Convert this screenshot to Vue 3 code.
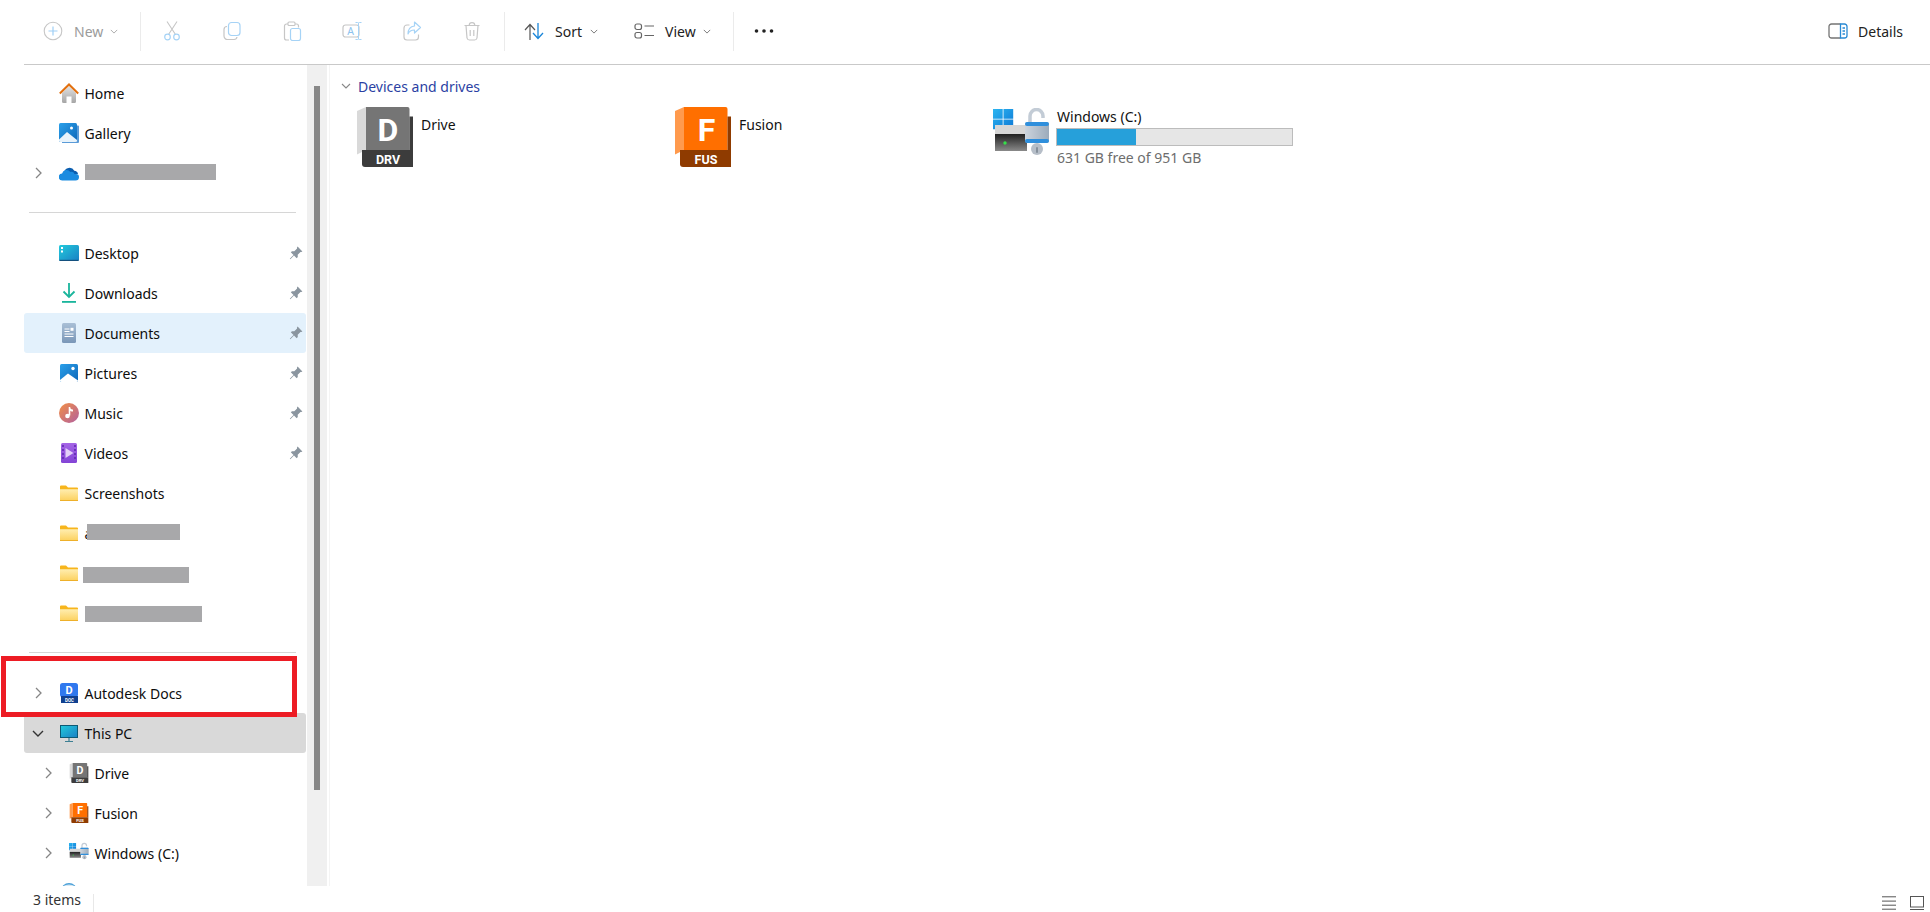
<template>
  <div class="app">
    <!-- shared icons -->
    <svg class="defs" aria-hidden="true">
      <defs>
        <linearGradient id="g-home" x1="0" y1="0" x2="0" y2="1"><stop offset="0" stop-color="#e2e2e2" /><stop offset="1" stop-color="#a6a6a6" /></linearGradient>
        <linearGradient id="g-blue" x1="0" y1="0" x2="1" y2="1"><stop offset="0" stop-color="#2aa0ea" /><stop offset="1" stop-color="#0f67b8" /></linearGradient>
        <linearGradient id="g-desk" x1="0" y1="0" x2="1" y2="1"><stop offset="0" stop-color="#22cbdc" /><stop offset="1" stop-color="#1a7fc4" /></linearGradient>
        <linearGradient id="g-doc" x1="0" y1="0" x2="0" y2="1"><stop offset="0" stop-color="#a9bfd6" /><stop offset="1" stop-color="#7a97b8" /></linearGradient>
        <linearGradient id="g-music" x1="0" y1="0" x2="1" y2="1"><stop offset="0" stop-color="#f28f45" /><stop offset="1" stop-color="#b2609f" /></linearGradient>
        <linearGradient id="g-video" x1="0" y1="0" x2="0" y2="1"><stop offset="0" stop-color="#a565e6" /><stop offset="1" stop-color="#8344d6" /></linearGradient>
        <linearGradient id="g-folder" x1="0" y1="0" x2="0" y2="1"><stop offset="0" stop-color="#ffeeb0" /><stop offset="1" stop-color="#fcd05c" /></linearGradient>
        <linearGradient id="g-disk" x1="0" y1="0" x2="0" y2="1"><stop offset="0" stop-color="#1f1f1f" /><stop offset="1" stop-color="#8a8a8a" /></linearGradient>
        <linearGradient id="g-lock" x1="0" y1="0" x2="1" y2="0"><stop offset="0" stop-color="#ccd4dd" /><stop offset="1" stop-color="#9cabbb" /></linearGradient>
        <linearGradient id="g-win" x1="0" y1="0" x2="1" y2="1"><stop offset="0" stop-color="#2bb5f0" /><stop offset="1" stop-color="#0d78d6" /></linearGradient>

        <symbol id="i-home" viewBox="0 0 20 20">
          <path d="M3 10 10 3l7 7v8.500a1.500 1.500 0 0 1-1.500 1.500h-3v-6.500h-5V20h-3A1.500 1.500 0 0 1 3 18.500z" fill="url(#g-home)" />
          <path d="M.8 10.500 10 1.500l9.200 9" fill="none" stroke="#e2700f" stroke-width="2" />
        </symbol>
        <symbol id="i-gallery" viewBox="0 0 20 20">
          <path d="M18 2.500h1a1 1 0 0 1 1 1V19a1 1 0 0 1-1 1H3v-1h15z" fill="#5a9bd8" />
          <rect y="0" width="18" height="19" rx="1.500" fill="url(#g-blue)" />
          <path d="M0 16.500 8 9l10 8v.5a1.500 1.500 0 0 1-1.500 1.500h-15A1.500 1.500 0 0 1 0 17.500z" fill="#e8f3fb" />
          <circle cx="12.500" cy="5" r="1.500" fill="#fff" />
        </symbol>
        <symbol id="i-cloud" viewBox="0 0 20 20">
          <path d="M5 9.500a5.500 5.500 0 0 1 10.300-1.700A4 4 0 0 1 19 11H5z" fill="#0a5eb0" />
          <path d="M3.500 17.500a3.500 3.500 0 0 1-.4-7 4.500 4.500 0 0 1 8.200-1.500c2-.5 3.500 .2 4.200 2H17a3 3 0 0 1 3 3 3.500 3.500 0 0 1-3.500 3.500z" fill="#1a8be0" />
        </symbol>
        <symbol id="i-desktop" viewBox="0 0 20 20">
          <rect y="2" width="20" height="16" rx="1.500" fill="url(#g-desk)" />
          <rect x="2" y="4" width="2" height="2" fill="#fff" />
          <rect x="2" y="7.500" width="2" height="2" fill="#fff" />
          <rect x="0.500" y="16.800" width="19" height="1.200" fill="#14507e" />
        </symbol>
        <symbol id="i-download" viewBox="0 0 20 20">
          <path d="M10 0v13M4.500 8.500 10 14l5.500-5.500" fill="none" stroke="#1ab59c" stroke-width="1.800" />
          <rect x="3" y="18" width="14" height="1.800" fill="#1ab59c" />
        </symbol>
        <symbol id="i-documents" viewBox="0 0 20 20">
          <rect x="3" width="14" height="20" rx="1.500" fill="url(#g-doc)" />
          <path d="M5.500 6h5M5.500 8.500h5M5.500 11h9M5.500 13.500h9" stroke="#fff" stroke-width="1" />
          <rect x="11.500" y="4.800" width="3" height="3" fill="#fff" />
        </symbol>
        <symbol id="i-pictures" viewBox="0 0 20 20">
          <rect x="1" y="1" width="18" height="18" rx="1.500" fill="url(#g-blue)" />
          <path d="M1 17 9 10.500 19 17.500a1.500 1.500 0 0 1-1.500 1.500h-15A1.500 1.500 0 0 1 1 17.500z" fill="#fff" />
          <circle cx="14" cy="5.500" r="1.700" fill="#fff" />
        </symbol>
        <symbol id="i-music" viewBox="0 0 20 20">
          <circle cx="10" cy="10" r="10" fill="url(#g-music)" />
          <path d="M10.500 4v8.500" stroke="#fff" stroke-width="1.600" />
          <path d="M10.500 4c.5 2 2.500 2.500 3.500 2.500v2c-1.500 0-3-.5-3.500-1.500z" fill="#fff" />
          <circle cx="8.500" cy="13" r="2.300" fill="#fff" />
        </symbol>
        <symbol id="i-videos" viewBox="0 0 20 20">
          <rect x="2" width="16" height="20" rx="1.500" fill="url(#g-video)" />
          <path d="M6.500 5v10l8-5z" fill="#e3d0f8" />
          <path d="M3.200 2h1.600v2H3.200zM3.200 6h1.600v2H3.200zM3.200 10h1.600v2H3.200zM3.200 14h1.600v2H3.200zM15.200 2h1.600v2h-1.600zM15.200 6h1.600v2h-1.600zM15.200 10h1.600v2h-1.600zM15.200 14h1.600v2h-1.600z" fill="#5f2bb0" />
        </symbol>
        <symbol id="i-folder" viewBox="0 0 20 20">
          <path d="M1 3.500a1 1 0 0 1 1-1h5l2 2h9a1 1 0 0 1 1 1V8H1z" fill="#f7b51c" />
          <path d="M1 6.200h18V17a1 1 0 0 1-1 1H2a1 1 0 0 1-1-1z" fill="url(#g-folder)" />
          <rect x="1" y="17" width="18" height="1" fill="#eeb02a" />
        </symbol>
        <symbol id="i-docs" viewBox="0 0 20 20">
          <rect x="1" width="18" height="14" rx="2.500" fill="#2f78ee" />
          <rect x="2" y="13" width="17" height="7" fill="#10408f" />
          <text x="10" y="10.500" class="t-letter" font-size="11" fill="#fff">D</text>
          <text x="10.500" y="18.500" class="t-letter" font-size="4.500" fill="#fff">DOC</text>
        </symbol>
        <symbol id="i-pc" viewBox="0 0 20 20">
          <rect x="1.500" y="2.500" width="17" height="12" fill="url(#g-desk)" stroke="#0d5a75" />
          <path d="M10 15v3M6 18.500h8" stroke="#3d7f93" stroke-width="1.200" />
        </symbol>
        <symbol id="i-network" viewBox="0 0 20 20">
          <circle cx="10" cy="8" r="8" fill="#4aa0d8" />
          <path d="M5 4c2-2 8-2 10 0" stroke="#d7e8f3" stroke-width="2" fill="none" />
        </symbol>
        <symbol id="i-pin" viewBox="0 0 14 14">
          <path d="M8.600.6 13.400 5.400 12.300 6.100 11.500 5.900 8.700 8.700 8.800 11 7.700 12.200 5 9.500 1.300 13.200.8 12.700 4.500 9 1.800 6.300 3 5.200 5.300 5.300 8.100 2.500 7.900 1.700z" fill="#8a959f" />
        </symbol>

        <symbol id="i-drive" viewBox="0 0 56 60">
          <path d="M0 4 9 0v43l-9 4.500z" fill="#d9d9d9" />
          <path d="M9 0h41.500a2 2 0 0 1 2 2v41H9z" fill="#757575" />
          <path d="M52.500 9.500H56V43h-3.500z" fill="#3c3c3c" />
          <path d="M5 43h51v17H8a3 3 0 0 1-3-3z" fill="#3c3c3c" />
          <text x="31" y="33.500" class="t-letter" font-size="32" fill="#fff">D</text>
          <text x="31" y="56.500" class="t-letter" font-size="12.500" fill="#fff">DRV</text>
        </symbol>
        <symbol id="i-fusion" viewBox="0 0 56 60">
          <path d="M0 4 9 0v43l-9 4.500z" fill="#ff9a4d" />
          <path d="M9 0h41.500a2 2 0 0 1 2 2v41H9z" fill="#ff6f00" />
          <path d="M52.500 9.500H56V43h-3.500z" fill="#8f3b00" />
          <path d="M5 43h51v17H8a3 3 0 0 1-3-3z" fill="#8f3b00" />
          <text x="31.500" y="33.500" class="t-letter" font-size="32" fill="#fff">F</text>
          <text x="31" y="56.500" class="t-letter" font-size="12.500" fill="#fff">FUS</text>
        </symbol>
        <symbol id="i-windows" viewBox="0 0 57 47">
          <path d="M0 1h9.700v9.700H0zM10.500 1h9.700v9.700h-9.700zM0 11.500h9.700v9.700H0zM10.500 11.500h9.700v9.700h-9.700z" fill="url(#g-win)" />
          <path d="M2 17h32v9H2z" fill="#d6d6d6" />
          <path d="M2 26h32v17H2z" fill="url(#g-disk)" />
          <circle cx="12" cy="35" r="1.700" fill="#35e04a" />
          <path d="M37 15V8a6.500 6.500 0 0 1 13 0v2" fill="none" stroke="#c3ccd6" stroke-width="3.500" />
          <rect x="32" y="14" width="24" height="21" rx="3" fill="url(#g-lock)" />
          <rect x="32" y="14" width="24" height="4" rx="2" fill="#2f8fdc" />
          <rect x="32" y="31" width="24" height="4" rx="2" fill="#2f8fdc" />
          <circle cx="44" cy="41" r="6" fill="#b6bec8" />
          <rect x="43" y="39" width="2" height="6" rx="1" fill="#858f9b" />
        </symbol>
      </defs>
    </svg>

    <header class="toolbar">
      <button class="new off">
        <svg class="ic" viewBox="0 0 20 20"><circle cx="10" cy="10" r="8.800" fill="none" stroke="#c6c6c6" stroke-width="1.100" /><path d="M10 5.500v9M5.500 10h9" stroke="#9fcff5" stroke-width="1.200" /></svg>
        <span class="label">New</span>
        <svg class="chev-down" viewBox="0 0 10 6"><path d="M1 1l4 4 4-4" /></svg>
      </button>
      <span class="sep"></span>
      <button class="tool first">
        <svg class="ic" viewBox="0 0 20 20"><path d="M6.500 13.500 15 .5M13.500 13.500 5 .5" stroke="#c6c6c6" stroke-width="1.100" fill="none" /><circle cx="5.500" cy="16" r="2.800" fill="none" stroke="#a6d3f6" stroke-width="1.200" /><circle cx="14.500" cy="16" r="2.800" fill="none" stroke="#a6d3f6" stroke-width="1.200" /></svg>
      </button>
      <button class="tool">
        <svg class="ic" viewBox="0 0 20 20"><path d="M5 5.500a3 3 0 0 0-3 3V15a3.500 3.500 0 0 0 3.500 3.500H12a3 3 0 0 0 3-2.500" fill="none" stroke="#c6c6c6" stroke-width="1.200" /><rect x="6.500" y="1.500" width="11.500" height="13" rx="3" fill="none" stroke="#a6d3f6" stroke-width="1.200" /></svg>
      </button>
      <button class="tool">
        <svg class="ic" viewBox="0 0 20 20"><path d="M6 3H4.500a2 2 0 0 0-2 2v12a2 2 0 0 0 2 2H7M13 3h1.500a2 2 0 0 1 2 2v1.500" fill="none" stroke="#c6c6c6" stroke-width="1.200" /><rect x="6" y="1" width="7" height="3.500" rx="1" fill="none" stroke="#c6c6c6" stroke-width="1.100" /><rect x="8.500" y="7.500" width="10" height="12" rx="2" fill="none" stroke="#a6d3f6" stroke-width="1.200" /></svg>
      </button>
      <button class="tool">
        <svg class="ic" viewBox="0 0 20 20"><rect x="1" y="4" width="16" height="12" rx="2.500" fill="none" stroke="#c6c6c6" stroke-width="1.200" /><text x="8.500" y="13.800" class="t-a" font-size="10.500" fill="#8dc3ee">A</text><path d="M13.500 1.500h2a1 1 0 0 1 1 1v15a1 1 0 0 1-1 1h-2M19.500 1.500h-2a1 1 0 0 0-1 1v15a1 1 0 0 0 1 1h2" fill="none" stroke="#a6d3f6" stroke-width="1" /></svg>
      </button>
      <button class="tool">
        <svg class="ic" viewBox="0 0 20 20"><path d="M7.500 4H5a3 3 0 0 0-3 3v9a3 3 0 0 0 3 3h8.500a3 3 0 0 0 3-3v-2.500" fill="none" stroke="#c6c6c6" stroke-width="1.200" /><path d="M12.500 1 18.500 6.500 12.500 12V9c-3.500 0-5.500 1.500-6.500 4 0-5 2.500-7.500 6.500-8z" fill="none" stroke="#a6d3f6" stroke-width="1.200" stroke-linejoin="round" /></svg>
      </button>
      <button class="tool last">
        <svg class="ic" viewBox="0 0 20 20"><path d="M2.500 4.500h15M7.200 4.500a2.800 2.800 0 0 1 5.600 0M4 4.500l1 12.500a2.500 2.500 0 0 0 2.500 2h5a2.500 2.500 0 0 0 2.500-2l1-12.500M8.200 9v6M11.800 9v6" fill="none" stroke="#c6c6c6" stroke-width="1.200" /></svg>
      </button>
      <span class="sep"></span>
      <button class="drop sort">
        <svg class="ic" viewBox="0 0 20 20"><path d="M6 4v15M1 9l5-5.500L11 9" fill="none" stroke="#555" stroke-width="1.200" /><path d="M14 2v15M9 12l5 5.500 5-5.500" fill="none" stroke="#1a86d9" stroke-width="1.300" /></svg>
        <span class="label">Sort</span>
        <svg class="chev-down" viewBox="0 0 10 6"><path d="M1 1l4 4 4-4" /></svg>
      </button>
      <button class="drop view">
        <svg class="ic" viewBox="0 0 20 20"><rect x="1" y="3" width="6.500" height="5.500" rx="2" fill="none" stroke="#666" stroke-width="1.200" /><rect x="1" y="11.500" width="6.500" height="5.500" rx="2" fill="none" stroke="#666" stroke-width="1.200" /><path d="M10.500 5H20M10.500 14.500H20" stroke="#666" stroke-width="1.200" /></svg>
        <span class="label">View</span>
        <svg class="chev-down" viewBox="0 0 10 6"><path d="M1 1l4 4 4-4" /></svg>
      </button>
      <span class="sep"></span>
      <button class="tool more">
        <svg class="dots" viewBox="0 0 20 4"><circle cx="2.500" cy="2" r="1.800" /><circle cx="10" cy="2" r="1.800" /><circle cx="17.500" cy="2" r="1.800" /></svg>
      </button>
      <button class="details">
        <svg class="details-ic" viewBox="0 0 20 16"><path d="M12.500 1H3.500A2.500 2.500 0 0 0 1 3.500v9A2.500 2.500 0 0 0 3.500 15h9" fill="#fff" stroke="#747474" stroke-width="1.300" /><path d="M12.500 1h4A2.500 2.500 0 0 1 19 3.500v9a2.500 2.500 0 0 1-2.500 2.500h-4z" fill="#fff" stroke="#2a8ad4" stroke-width="1.300" /><path d="M14.500 5h2.500M14.500 8h2.500M14.500 11h2.500" stroke="#2a8ad4" stroke-width="1.300" /></svg>
        <span class="label">Details</span>
      </button>
    </header>

    <div class="body">
      <nav class="nav">
        <div class="nav-list">
          <template v-for="(row, i) in navRows" :key="i">
            <div v-if="row.divider" class="divider"></div>
            <div v-else class="row" :class="{ sub: row.sub, selected: row.selected, hover: row.hover }">
              <span class="arrow">
                <svg v-if="row.arrow === 'right'" class="chev-right" viewBox="0 0 7 12"><path d="M1 1l5 5-5 5" /></svg>
                <svg v-if="row.arrow === 'open'" class="chev-open" viewBox="0 0 12 7"><path d="M1 1l5 5 5-5" /></svg>
              </span>
              <svg class="row-icon" :class="{ lift: row.icon === 'windows' }"><use :href="'#i-' + row.icon" /></svg>
              <span class="name">{{ row.name }}</span>
              <span v-if="row.blank" class="blank" :style="{ left: row.blank[0] + 'px', width: row.blank[1] + 'px', top: row.blank[2] + 'px' }"></span>
              <svg v-if="row.pin" class="pin"><use href="#i-pin" /></svg>
            </div>
          </template>
        </div>
        <div class="scroll"><div class="thumb"></div></div>
      </nav>

      <main class="main">
        <div class="group">
          <svg class="group-chev" viewBox="0 0 10 6"><path d="M1 1l4 4 4-4" /></svg>
          <span>Devices and drives</span>
        </div>
        <div class="tiles">
          <div class="tile">
            <svg class="big"><use href="#i-drive" /></svg>
            <span class="tile-name">Drive</span>
          </div>
          <div class="tile">
            <svg class="big"><use href="#i-fusion" /></svg>
            <span class="tile-name">Fusion</span>
          </div>
          <div class="tile disk">
            <svg class="big-disk"><use href="#i-windows" /></svg>
            <div class="disk-info">
              <div class="disk-name">Windows (C:)</div>
              <div class="meter"><div class="meter-fill" :style="{ width: usedPct + '%' }"></div></div>
              <div class="disk-free">631 GB free of 951 GB</div>
            </div>
          </div>
        </div>
      </main>
    </div>

    <footer class="status">
      <span class="count">3 items</span>
      <span class="status-sep"></span>
      <div class="view-btns">
        <svg class="list-ic" viewBox="0 0 14 14"><path d="M0 .8h14M0 5.100h14M0 9.200h14M0 13.200h14" stroke="#555" stroke-width="1" /></svg>
        <svg class="list-ic" viewBox="0 0 14 14"><rect x=".5" y=".5" width="13" height="10.500" fill="none" stroke="#555" /><path d="M0 13.500h14" stroke="#555" /></svg>
      </div>
    </footer>

    <div class="callout"></div>
  </div>
</template>

<script setup>
const usedPct = ((951 - 631) / 951) * 100

// blank = [left, width, top] of the grey censor box inside the row
const navRows = [
  { name: 'Home', icon: 'home' },
  { name: 'Gallery', icon: 'gallery' },
  { name: '', icon: 'cloud', arrow: 'right', blank: [85, 131, 11] },
  { divider: true },
  { name: 'Desktop', icon: 'desktop', pin: true },
  { name: 'Downloads', icon: 'download', pin: true },
  { name: 'Documents', icon: 'documents', pin: true, selected: true },
  { name: 'Pictures', icon: 'pictures', pin: true },
  { name: 'Music', icon: 'music', pin: true },
  { name: 'Videos', icon: 'videos', pin: true },
  { name: 'Screenshots', icon: 'folder' },
  { name: 'a', icon: 'folder', blank: [87, 93, 11] },
  { name: '', icon: 'folder', blank: [83, 106, 14] },
  { name: '', icon: 'folder', blank: [85, 117, 13] },
  { divider: true },
  { name: 'Autodesk Docs', icon: 'docs', arrow: 'right' },
  { name: 'This PC', icon: 'pc', arrow: 'open', hover: true },
  { name: 'Drive', icon: 'drive', arrow: 'right', sub: true },
  { name: 'Fusion', icon: 'fusion', arrow: 'right', sub: true },
  { name: 'Windows (C:)', icon: 'windows', arrow: 'right', sub: true },
  { name: '', icon: 'network', arrow: 'right' }
]
</script>

<style>
html,
body {
  margin: 0;
  background: #fff;
}
</style>

<style scoped>
.app {
  position: relative;
  display: flex;
  flex-direction: column;
  width: 1930px;
  height: 912px;
  overflow: hidden;
  background: #fff;
  color: #111;
  font-family: "Noto Sans", "Liberation Sans", sans-serif;
  font-size: 14px;
}

.defs {
  position: absolute;
  width: 0;
  height: 0;
}

.t-letter {
  font-family: Roboto, "Liberation Sans", sans-serif;
  font-weight: 700;
  text-anchor: middle;
}

.t-a {
  font-family: "Noto Sans", sans-serif;
  text-anchor: middle;
}

button {
  display: flex;
  align-items: center;
  padding: 0;
  border: 0;
  background: none;
  font: inherit;
  color: inherit;
}

/* toolbar */
.toolbar {
  display: flex;
  align-items: center;
  flex: none;
  height: 62px;
  margin-left: 24px;
  padding: 0 0 2px 19px;
  border-bottom: 1px solid #c9c9c9;
}

.ic {
  flex: none;
  width: 20px;
  height: 20px;
}

.sep {
  flex: none;
  width: 1px;
  height: 39px;
  background: #ebebeb;
}

.label {
  color: #222;
}

.new {
  width: 97px;
  gap: 11px;
}

.new .label {
  color: #9b9b9b;
}

.chev-down {
  width: 8px;
  height: 5px;
  margin-left: -3px;
  fill: none;
  stroke: #777;
  stroke-width: 1.200;
}

.new .chev-down {
  margin-left: -4px;
  stroke: #aaa;
}

.view .chev-down {
  margin-left: -4px;
}

.tool {
  flex: none;
  justify-content: center;
  width: 60px;
  height: 40px;
}

.tool.first {
  margin-left: 1px;
}

.tool.last {
  margin-right: 2px;
}

.drop {
  flex: none;
  gap: 11px;
}

.sort {
  width: 129px;
  padding-left: 19px;
}

.view {
  width: 99px;
}

.dots {
  width: 20px;
  height: 4px;
  fill: #222;
}

.details {
  gap: 10px;
  margin-left: auto;
  padding-right: 27px;
}

.details-ic {
  width: 20px;
  height: 16px;
}

/* navigation pane */
.body {
  display: flex;
  flex: 1;
  min-height: 0;
}

.nav {
  display: flex;
  flex: none;
  width: 330px;
  border-right: 1px solid #f4f4f4;
  box-sizing: border-box;
}

.nav-list {
  flex: none;
  width: 282px;
  margin-left: 24px;
  padding: 8px 1px 0 0;
  overflow: hidden;
}

.row {
  position: relative;
  display: flex;
  align-items: center;
  width: 282px;
  height: 40px;
  border-radius: 3px;
}

.row.selected {
  background: #e3f1fc;
}

.row.hover {
  background: #d9d9d9;
}

.row.sub {
  padding-left: 10px;
  box-sizing: border-box;
}

.arrow {
  display: flex;
  flex: none;
  justify-content: center;
  width: 28px;
  margin-right: 7px;
}

.chev-right {
  width: 7px;
  height: 12px;
  fill: none;
  stroke: #858585;
  stroke-width: 1.300;
}

.chev-open {
  width: 12px;
  height: 7px;
  fill: none;
  stroke: #333;
  stroke-width: 1.400;
}

.row-icon {
  flex: none;
  width: 20px;
  height: 20px;
  margin-right: 5.500px;
}

.row-icon.lift {
  margin-bottom: 5px;
}

.name {
  color: #0d0d0d;
  white-space: nowrap;
}

.blank {
  position: absolute;
  height: 16px;
  margin-left: -24px;
  background: #a8a8aa;
}

.pin {
  width: 14px;
  height: 14px;
  margin: 0 3px 0 auto;
}

.divider {
  position: relative;
  width: 267px;
  height: 40px;
  margin-left: 5px;
}

.divider::after {
  content: "";
  position: absolute;
  top: 19px;
  left: 0;
  right: 0;
  height: 1px;
  background: #d6d6d6;
}

.scroll {
  position: relative;
  flex: none;
  width: 20px;
  background: #f0f0f0;
}

.thumb {
  width: 6px;
  height: 704px;
  margin: 21px 0 0 7px;
  background: #888;
}

/* content */
.main {
  flex: 1;
  padding: 11px 0 0 11px;
}

.group {
  display: flex;
  align-items: center;
  gap: 7px;
  height: 20px;
  color: #2b3fa3;
}

.group-chev {
  width: 10px;
  height: 6px;
  fill: none;
  stroke: #888;
  stroke-width: 1.100;
}

.tiles {
  display: grid;
  grid-template-columns: repeat(3, 318px);
  margin: 11px 0 0 16px;
}

.tile {
  display: flex;
  gap: 8px;
}

.big {
  flex: none;
  width: 56px;
  height: 60px;
}

.tile-name {
  margin-top: 8px;
  line-height: 20px;
}

.disk {
  gap: 7px;
}

.big-disk {
  flex: none;
  width: 57px;
  height: 47px;
  margin-top: 1px;
}

.disk-name,
.disk-free {
  line-height: 20px;
}

.meter {
  width: 237px;
  height: 18px;
  margin-top: 1px;
  margin-left: -1px;
  border: 1px solid #bcbcbc;
  box-sizing: border-box;
  background: #e6e6e6;
}

.meter-fill {
  height: 100%;
  background: #26a0da;
}

.disk-free {
  margin-top: 2px;
  color: #6d6d6d;
}

/* status bar */
.status {
  display: flex;
  align-items: center;
  flex: none;
  height: 26px;
  padding-left: 33px;
  background: #fff;
}

.count {
  width: 60px;
  color: #333;
}

.status-sep {
  width: 1px;
  height: 18px;
  margin-top: 8px;
  background: #e8e8e8;
}

.view-btns {
  display: flex;
  gap: 14px;
  margin-left: auto;
  padding: 7px 6px 0 0;
}

.list-ic {
  display: block;
  width: 14px;
  height: 14px;
}

/* red annotation drawn over the screenshot */
.callout {
  position: absolute;
  top: 656px;
  left: 1px;
  width: 296px;
  height: 61px;
  box-sizing: border-box;
  border: 5px solid #ed1c24;
  pointer-events: none;
}
</style>
